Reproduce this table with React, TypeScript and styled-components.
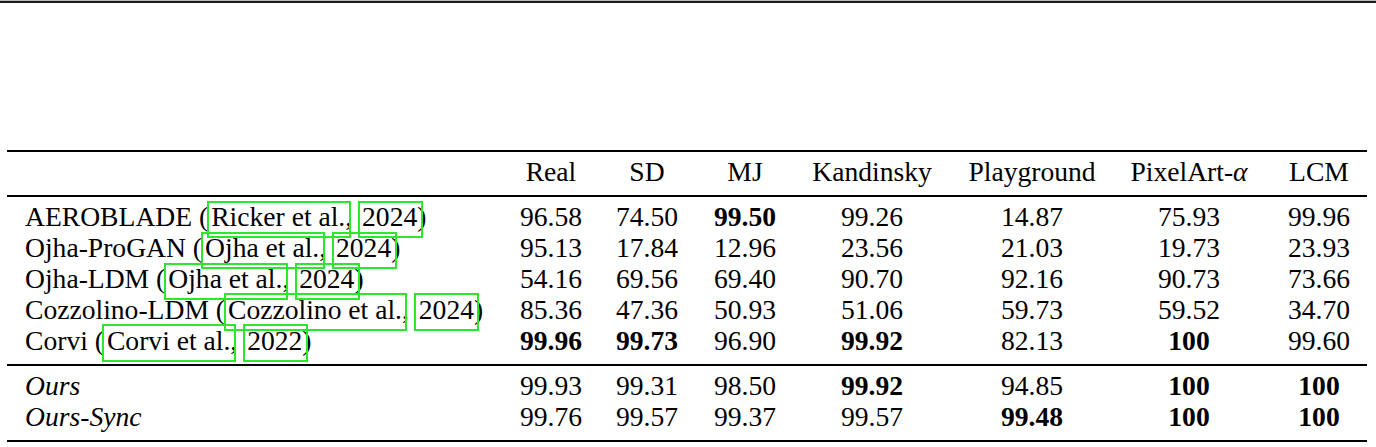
import React from 'react'
import styled, {createGlobalStyle} from 'styled-components'

const GlobalStyle = createGlobalStyle`
  html, body {
    margin: 0;
    background: #fff;
  }
`

const Page = styled.div`
  width: 1376px;
  height: 447px;
  overflow: hidden;
  background: #fff;
  color: #000;
  font-family: "Liberation Serif", "Times New Roman", serif;
  font-size: 27.6px;
`

// tail of the previous table, cut by the top of the crop
const PrevRule = styled.div`
  margin-top: 1px;
  height: 2px;
  background: #1c1c1c;
  box-shadow: 0 -1px 0 #b8b8b8;
`

const Table = styled.div`
  width: 1360px;
  margin: 147px 0 0 7px;
`

const Rule = styled.div<{$h: number}>`
  height: ${({$h}) => $h}px;
  background: #000;
`

const Section = styled.div<{$pt: number; $pb: number}>`
  padding: ${({$pt}) => $pt}px 0 ${({$pb}) => $pb}px;
`

const Row = styled.div`
  display: grid;
  grid-template-columns: 504px 80px 112px 84px 170px 150px 164px 96px;
  height: 30.85px;
  line-height: 30.85px;
  white-space: nowrap;
`

const NameCell = styled.div<{$italic?: boolean}>`
  padding-left: 18px;
  font-style: ${({$italic}) => ($italic ? 'italic' : 'normal')};
`

const Cell = styled.div<{$bold?: boolean}>`
  text-align: center;
  font-weight: ${({$bold}) => ($bold ? 700 : 400)};
`

const Alpha = styled.i`
  font-style: italic;
`

// hyperref-style link box drawn over the citation text
const Cite = styled.span`
  position: relative;
  margin-left: 3px;

  &::after {
    content: '';
    position: absolute;
    left: -4.5px;
    right: -5.5px;
    top: -0.5px;
    bottom: -5.7px;
    border: 2px solid rgb(44, 232, 44);
    pointer-events: none;
  }
`

type Value = {v: string; b?: boolean}

interface Method {
  name: string
  author: string
  year: string
  values: Value[]
}

const n = (v: string): Value => ({v})
const b = (v: string): Value => ({v, b: true})

const headers: React.ReactNode[] = [
  'Real',
  'SD',
  'MJ',
  'Kandinsky',
  'Playground',
  <>PixelArt-<Alpha>α</Alpha></>,
  'LCM',
]

const baselines: Method[] = [
  {
    name: 'AEROBLADE',
    author: 'Ricker et al.',
    year: '2024',
    values: [n('96.58'), n('74.50'), b('99.50'), n('99.26'), n('14.87'), n('75.93'), n('99.96')],
  },
  {
    name: 'Ojha-ProGAN',
    author: 'Ojha et al.',
    year: '2024',
    values: [n('95.13'), n('17.84'), n('12.96'), n('23.56'), n('21.03'), n('19.73'), n('23.93')],
  },
  {
    name: 'Ojha-LDM',
    author: 'Ojha et al.',
    year: '2024',
    values: [n('54.16'), n('69.56'), n('69.40'), n('90.70'), n('92.16'), n('90.73'), n('73.66')],
  },
  {
    name: 'Cozzolino-LDM',
    author: 'Cozzolino et al.',
    year: '2024',
    values: [n('85.36'), n('47.36'), n('50.93'), n('51.06'), n('59.73'), n('59.52'), n('34.70')],
  },
  {
    name: 'Corvi',
    author: 'Corvi et al.',
    year: '2022',
    values: [b('99.96'), b('99.73'), n('96.90'), b('99.92'), n('82.13'), b('100'), n('99.60')],
  },
]

const ours: {name: string; values: Value[]}[] = [
  {
    name: 'Ours',
    values: [n('99.93'), n('99.31'), n('98.50'), b('99.92'), n('94.85'), b('100'), b('100')],
  },
  {
    name: 'Ours-Sync',
    values: [n('99.76'), n('99.57'), n('99.37'), n('99.57'), b('99.48'), b('100'), b('100')],
  },
]

const Values = ({values}: {values: Value[]}) => (
  <>
    {values.map((value, i) => (
      <Cell key={i} $bold={value.b}>{value.v}</Cell>
    ))}
  </>
)

const App = () => (
  <Page>
    <GlobalStyle/>
    <PrevRule/>
    <Table>
      <Rule $h={2}/>
      <Section $pt={5} $pb={7}>
        <Row>
          <NameCell/>
          {headers.map((header, i) => (
            <Cell key={i}>{header}</Cell>
          ))}
        </Row>
      </Section>
      <Rule $h={2}/>
      <Section $pt={5.6} $pb={7.8}>
        {baselines.map((method) => (
          <Row key={method.name}>
            <NameCell>
              {method.name} (<Cite>{method.author}</Cite>, <Cite>{method.year}</Cite>)
            </NameCell>
            <Values values={method.values}/>
          </Row>
        ))}
      </Section>
      <Rule $h={1.5}/>
      <Section $pt={5} $pb={7}>
        {ours.map((method) => (
          <Row key={method.name}>
            <NameCell $italic>{method.name}</NameCell>
            <Values values={method.values}/>
          </Row>
        ))}
      </Section>
      <Rule $h={2}/>
    </Table>
  </Page>
)

export default App
